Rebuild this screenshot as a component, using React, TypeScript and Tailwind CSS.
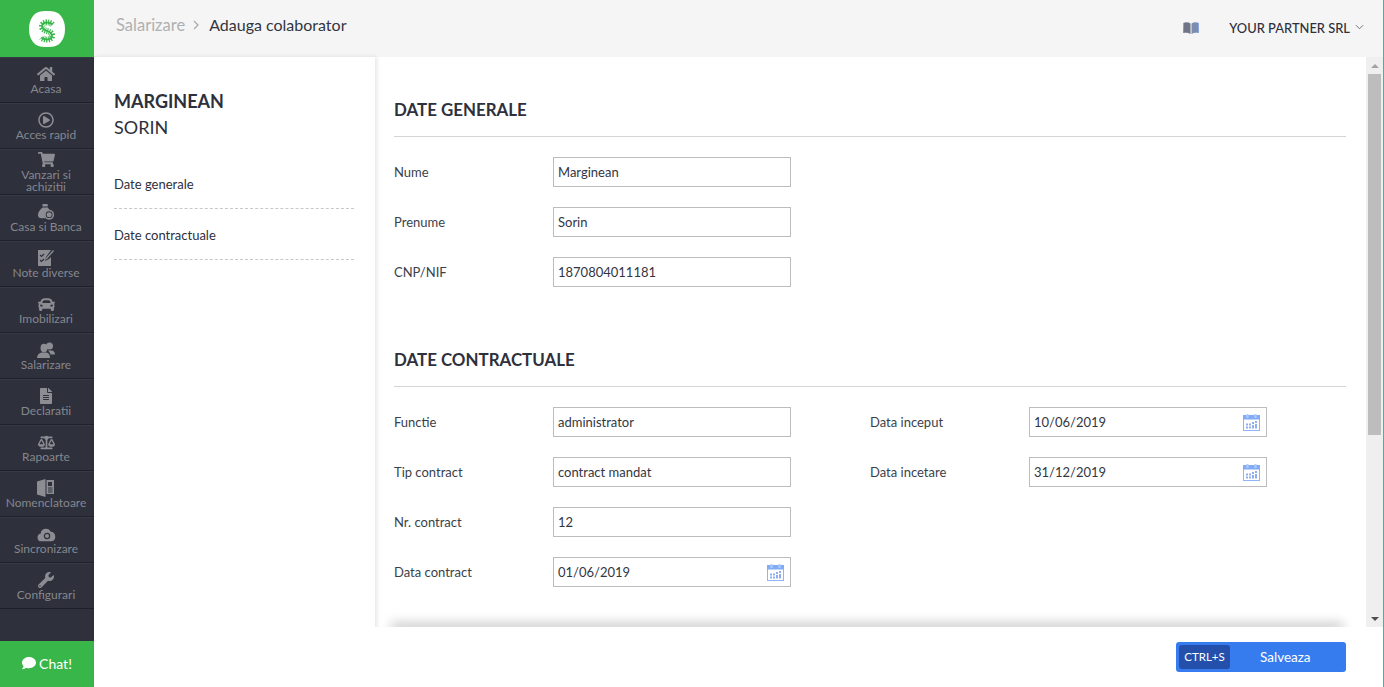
import React from "react";
import {
  FaHome, FaRegPlayCircle, FaShoppingCart, FaCar, FaFileAlt, FaBalanceScale, FaWrench, FaComment,
} from "react-icons/fa";

const Bag = () => (
  <svg viewBox="0 0 20 20" width="18" height="18" fill="#8b8d93">
    <rect x="6" y="1" width="6" height="3" rx="1" />
    <path d="M6 5h6c1 1.500 2 2.500 2.500 4A6 6 0 0 0 9 17H5c-3 0-4-2-4-4 0-3 3-6 5-8z" />
    <circle cx="13.500" cy="13" r="5.500" />
    <circle cx="13.500" cy="13" r="3.800" fill="#2e303c" />
    <circle cx="13.500" cy="13" r="2.800" />
  </svg>
);
const Note = () => (
  <svg viewBox="0 0 18 18" width="18" height="18">
    <path d="M1 1h13l-5 7-1 4 4-2 2-2v9H1z" fill="#8b8d93" />
    <path d="M9 9l7-8 1 1-7 8-2 1z" fill="#8b8d93" />
    <path d="M3 6l1.500 1.500L7 5M3 11l1.500 1.500L7 10" stroke="#2e303c" strokeWidth="1.200" fill="none" />
  </svg>
);
const Users = () => (
  <svg viewBox="0 0 18 18" width="18" height="18" fill="#8b8d93">
    <circle cx="12.500" cy="5" r="3.500" />
    <path d="M11 9.500h4c2 .5 3 2 3 4h-4.500c-.5-2-1.500-3-2.500-4z" />
    <ellipse cx="7" cy="7" rx="3.500" ry="4.200" />
    <path d="M0 17c0-3 2-5 4.500-5.500h5C12 12 13 14 13 17z" />
  </svg>
);
const Book = () => (
  <svg viewBox="0 0 18 18" width="18" height="18" fill="#8b8d93">
    <path d="M0 2.500 8.500 0v18L0 15.500z" />
    <path d="M9.500 1H17v14H9.500z" />
    <rect x="11" y="3" width="4" height="4" fill="#2e303c" />
    <path d="M11 9h4.500M11 11h4.500M11 13h4.500" stroke="#2e303c" />
  </svg>
);
const Cloud = () => (
  <svg viewBox="0 0 18 14" width="19" height="15" fill="#8b8d93">
    <path d="M4 13.500a3.800 3.800 0 0 1-.5-7.500 5 5 0 0 1 9.500-1.500 4.600 4.600 0 0 1 1 9z" />
    <circle cx="9.500" cy="8.500" r="2.500" fill="none" stroke="#2e303c" strokeWidth="1.200" />
  </svg>
);
const S = "M23.500 13.500c-1.500-1.500-3.500-2-5.500-2-3 0-5 1.500-5 4 0 2.500 2 3.500 5 4.500s5 2 5 4.500-2 4-5 4c-2 0-4-.5-5.500-2";
const Logo = () => (
  <svg viewBox="0 0 36 36" width="36" height="36">
    <path d="M18 0c7 0 11 1 14 5 3 4 4 8 4 13s-1 9-4 13c-3 4-7 5-14 5S7 35 4 31C1 27 0 23 0 18S1 9 4 5C7 1 11 0 18 0z" fill="#fff" />
    <path d={S} fill="none" stroke="#38b64a" strokeWidth="6" strokeDasharray="1 1" />
    <path d={S} fill="none" stroke="#38b64a" strokeWidth="1.800" />
  </svg>
);
const Calendar = () => (
  <svg viewBox="0 0 17 17" width="17" height="17" className="shrink-0">
    <rect x="0.500" y="1.500" width="16" height="15" fill="#fff" stroke="#8fb4f7" />
    <rect x="0" y="1" width="17" height="4.500" fill="#82acf6" />
    <rect x="3.500" y="0" width="2" height="4" fill="#b3ccfa" />
    <rect x="11.500" y="0" width="2" height="4" fill="#b3ccfa" />
    <path d="M3 9.500h2v2H3zM6 9.500h2v2H6zM9 8h2v2H9zM12 7h2v2h-2zM3 12.500h2v2H3zM6 12.500h2v2H6zM9 11h2v3.500H9zM12 10h2v4.500h-2z" fill="#8fadf3" />
  </svg>
);
const OpenBook = () => (
  <svg viewBox="0 0 16 12" width="16" height="12">
    <path d="M0 1c3-1 5-1 7.500.5V12C5 10.500 3 10.500 0 11z" fill="#6f7486" />
    <path d="M16 1c-3-1-5-1-7.500.5V12c2.500-1.500 4.500-1.500 7.500-1z" fill="#7c8db0" />
    <path d="M.5 1 0 11" stroke="#c89f7d" />
    <path d="M15.500 1l.5 10" stroke="#90b0e8" />
  </svg>
);

const nav: { label: React.ReactNode; icon: React.ReactNode; top?: boolean }[] = [
  { label: "Acasa", icon: <FaHome size={18} color="#8b8d93" /> },
  { label: "Acces rapid", icon: <FaRegPlayCircle size={16} color="#8b8d93" /> },
  { label: <>Vanzari si<br />achizitii</>, icon: <FaShoppingCart size={17} color="#8b8d93" />, top: true },
  { label: "Casa si Banca", icon: <Bag /> },
  { label: "Note diverse", icon: <Note /> },
  { label: "Imobilizari", icon: <FaCar size={17} color="#8b8d93" /> },
  { label: "Salarizare", icon: <Users /> },
  { label: "Declaratii", icon: <FaFileAlt size={16} color="#8b8d93" /> },
  { label: "Rapoarte", icon: <FaBalanceScale size={17} color="#8b8d93" /> },
  { label: "Nomenclatoare", icon: <Book /> },
  { label: "Sincronizare", icon: <Cloud /> },
  { label: "Configurari", icon: <FaWrench size={16} color="#8b8d93" /> },
];

const Field = ({ label, value, cal }: { label: string; value: string; cal?: boolean }) => (
  <div className="flex items-center h-[30px] mb-5">
    <label className="w-[159px] shrink-0 pt-[2px] text-[13px] text-[#3a3f4a]">{label}</label>
    <div className="w-[238px] h-[30px] border border-[#bdbdbd] flex items-center justify-between pl-[4px] pr-[6px] text-[13px] text-[#33363f] bg-white">
      <span className="pt-[2px]">{value}</span>
      {cal && <Calendar />}
    </div>
  </div>
);

export default function App() {
  return (
    <div className="flex h-[687px] w-[1384px] overflow-hidden bg-white border-r border-r-[#2fb5c8] font-['Lato','Open_Sans',sans-serif]">
      <aside className="w-[94px] shrink-0 flex flex-col bg-[#2e303c]">
        <div className="h-[57px] shrink-0 bg-[#38b64a] flex items-center justify-center pr-[1px]">
          <Logo />
        </div>
        <nav className="flex-1">
          {nav.map((n, i) => (
            <div
              key={i}
              className={`h-[46px] pr-[2px] border-b border-b-[#1f2029] border-t border-t-[#373945] flex flex-col items-center text-center text-[12px] leading-[12px] text-[#85878e] ${n.top ? "pt-[1px]" : "pt-[7px]"}`}
            >
              <div className={`flex items-center justify-center ${n.top ? "h-[17px]" : "h-[18px]"}`}>{n.icon}</div>
              <div className={n.top ? "mt-[1px]" : ""}>{n.label}</div>
            </div>
          ))}
        </nav>
        <div className="h-[46px] shrink-0 bg-[#38b64a] flex items-center justify-center gap-[3px] text-white text-[14px] pb-[2px]">
          <FaComment size={14} />
          <span>Chat!</span>
        </div>
      </aside>

      <div className="flex-1 flex flex-col min-w-0">
        <header className="h-[57px] shrink-0 bg-[#f5f5f5] flex items-center pl-[22px] pr-[19px]">
          <div className="flex items-center pb-[7px]">
            <span className="text-[16.5px] text-[#b0b0b0]">Salarizare</span>
            <svg viewBox="0 0 8 10" width="8" height="10" className="mx-[7px]">
              <path d="M2 1l4 4-4 4" fill="none" stroke="#a9a9a9" strokeWidth="1.200" />
            </svg>
            <span className="text-[16px] ml-[2px] text-[#33363f]">Adauga colaborator</span>
          </div>
          <div className="ml-auto flex items-center">
            <OpenBook />
            <span className="ml-[30px] text-[12.900px] font-medium text-[#2e303c]">YOUR PARTNER SRL</span>
            <svg viewBox="0 0 10 6" width="9" height="6" className="ml-[5px] mb-[2px]">
              <path d="M1 1l4 4 4-4" fill="none" stroke="#6f7276" strokeWidth="1.100" />
            </svg>
          </div>
        </header>

        <div className="flex-1 flex min-h-0">
          <section className="w-[281px] shrink-0 shadow-[2px_0_4px_rgba(0,0,0,0.1)] pl-[20px] pr-[21px] pt-[33px] z-10 bg-white">
            <div className="text-[18px] leading-[23px] font-bold text-[#2e303c]">MARGINEAN</div>
            <div className="text-[18px] leading-[23px] mt-[3px] text-[#2e303c]">SORIN</div>
            <div className="mt-[28px] h-[42px] border-b border-dashed border-[#c8c8c8] text-[13px] text-[#2e303c] pt-[8px]">Date generale</div>
            <div className="h-[51px] border-b border-dashed border-[#c8c8c8] text-[13px] text-[#2e303c] pt-[17px]">Date contractuale</div>
          </section>

          <div className="flex-1 flex flex-col min-w-0">
            <div className="flex-1 flex min-h-0">
              <main className="flex-1 min-w-0 relative overflow-hidden pl-[19px] pr-[20px] pt-[41px]">
                <h2 className="text-[16.900px] leading-[24px] font-bold text-[#2e303c] pb-[14px] border-b border-[#d4d4d4] mb-5">DATE GENERALE</h2>
                <Field label="Nume" value="Marginean" />
                <Field label="Prenume" value="Sorin" />
                <Field label="CNP/NIF" value="1870804011181" />
                <h2 className="mt-[61px] text-[16.900px] leading-[24px] font-bold text-[#2e303c] pb-[14px] border-b border-[#d4d4d4] mb-5">DATE CONTRACTUALE</h2>
                <div className="grid grid-cols-[476px_1fr]">
                  <div>
                    <Field label="Functie" value="administrator" />
                    <Field label="Tip contract" value="contract mandat" />
                    <Field label="Nr. contract" value="12" />
                    <Field label="Data contract" value="01/06/2019" cal />
                  </div>
                  <div>
                    <Field label="Data inceput" value="10/06/2019" cal />
                    <Field label="Data incetare" value="31/12/2019" cal />
                  </div>
                </div>
                <div className="absolute left-[19px] right-[26px] bottom-0 h-0 shadow-[0_0_12px_3px_rgba(0,0,0,0.32)]" />
              </main>
              <div className="w-[17px] shrink-0 bg-[#efefef] flex flex-col items-center">
                <div className="h-[17px] w-full flex items-center justify-center">
                  <div className="border-x-[4px] border-x-transparent border-b-[4px] border-b-[#a3a3a3]" />
                </div>
                <div className="h-[361px] w-[13px] bg-[#bdbdbd]" />
                <div className="mt-auto h-[17px] w-full flex items-center justify-center">
                  <div className="border-x-[4px] border-x-transparent border-t-[4px] border-t-[#505050]" />
                </div>
              </div>
            </div>
            <footer className="h-[60px] shrink-0 bg-white z-10 flex items-start pt-[15px] pl-[801px]">
              <button className="w-[170px] h-[30px] rounded-[3px] bg-[#367cee] flex items-center pl-[3px] text-white">
                <span className="w-[51px] h-[24px] rounded-[3px] bg-[#2450ab] text-[11.500px] flex items-center justify-center">CTRL+S</span>
                <span className="ml-[30px] text-[13.500px]">Salveaza</span>
              </button>
            </footer>
          </div>
        </div>
      </div>
    </div>
  );
}
